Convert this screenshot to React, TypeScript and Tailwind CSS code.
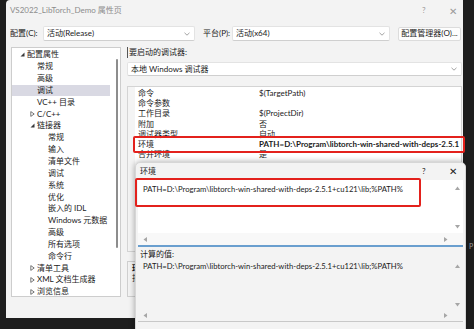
import React from "react";

const treeItems: { label: string; level: number; arrow?: "open" | "closed"; selected?: boolean }[] = [
  { label: "配置属性", level: 0, arrow: "open" },
  { label: "常规", level: 1 },
  { label: "高级", level: 1 },
  { label: "调试", level: 1, selected: true },
  { label: "VC++ 目录", level: 1 },
  { label: "C/C++", level: 1, arrow: "closed" },
  { label: "链接器", level: 1, arrow: "open" },
  { label: "常规", level: 2 },
  { label: "输入", level: 2 },
  { label: "清单文件", level: 2 },
  { label: "调试", level: 2 },
  { label: "系统", level: 2 },
  { label: "优化", level: 2 },
  { label: "嵌入的 IDL", level: 2 },
  { label: "Windows 元数据", level: 2 },
  { label: "高级", level: 2 },
  { label: "所有选项", level: 2 },
  { label: "命令行", level: 2 },
  { label: "清单工具", level: 1, arrow: "closed" },
  { label: "XML 文档生成器", level: 1, arrow: "closed" },
  { label: "浏览信息", level: 1, arrow: "closed" },
];

const gridRows: [string, string][] = [
  ["命令", "$(TargetPath)"],
  ["命令参数", ""],
  ["工作目录", "$(ProjectDir)"],
  ["附加", "否"],
  ["调试器类型", "自动"],
  ["环境", "PATH=D:\\Program\\libtorch-win-shared-with-deps-2.5.1"],
  ["合并环境", "是"],
];

const PATH_VALUE = "PATH=D:\\Program\\libtorch-win-shared-with-deps-2.5.1+cu121\\lib;%PATH%";

function Chevron() {
  return (
    <svg width="6" height="4" viewBox="0 0 6 4" className="shrink-0">
      <path d="M0.5 0.8 L3 3.2 L5.5 0.8" fill="none" stroke="#8a8a8a" strokeWidth="0.8" />
    </svg>
  );
}

function Tri({ dir }: { dir: "up" | "down" | "left" | "right" }) {
  const d = {
    up: "M0 4 L2.5 0.5 L5 4 Z",
    down: "M0 1 L2.5 4.5 L5 1 Z",
    left: "M4 0 L0.5 2.5 L4 5 Z",
    right: "M1 0 L4.5 2.5 L1 5 Z",
  }[dir];
  return (
    <svg width="5" height="5" viewBox="0 0 5 5">
      <path d={d} fill="#a6a6a6" />
    </svg>
  );
}

function TreeArrow({ kind }: { kind: "open" | "closed" }) {
  if (kind === "open") {
    return (
      <svg width="5" height="5" viewBox="0 0 5 5">
        <path d="M4.5 0.5 L4.5 4.5 L0.5 4.5 Z" fill="#3a3a3a" />
      </svg>
    );
  }
  return (
    <svg width="5" height="6" viewBox="0 0 5 6">
      <path d="M0.8 0.6 L4.2 3 L0.8 5.4 Z" fill="none" stroke="#555" strokeWidth="0.8" />
    </svg>
  );
}

function Dropdown({ text, className }: { text: string; className: string }) {
  return (
    <div
      className={`flex items-center justify-between bg-white border border-[#e3e3e3] border-b-[#cfcfcf] rounded-[2px] pl-[3px] pr-[4px] ${className}`}
    >
      <span className="whitespace-nowrap">{text}</span>
      <Chevron />
    </div>
  );
}

function Tree() {
  return (
    <div className="relative w-[110px] h-[250px] bg-white border border-[#cdcdcd] pt-[1px] overflow-hidden">
      {treeItems.map((item, i) => (
        <div key={i} className="flex items-center h-[11.85px] w-[98px]">
          <div className={`flex items-center h-full w-full ${item.selected ? "bg-[#d9d9e3]" : ""}`}>
            <div
              className={
                item.level === 0
                  ? "w-[15px] flex justify-end pr-[2px]"
                  : item.level === 1
                  ? "w-[25px] flex justify-end pr-[2px]"
                  : "w-[36px]"
              }
            >
              {item.arrow ? <TreeArrow kind={item.arrow} /> : null}
            </div>
            <span className="whitespace-nowrap">{item.label}</span>
          </div>
        </div>
      ))}
      {/* thin scroll thumb */}
      <div className="absolute left-[104px] top-[11px] w-[2px] h-[189px] bg-[#8d8d8d] rounded-full" />
    </div>
  );
}

function PropertyGrid() {
  return (
    <div className="relative h-[166px] bg-white border border-[#d4d4d4] flex">
      <div className="w-[7px] bg-[#f4f4f4]" />
      <div className="flex-1 pt-[1px] overflow-hidden">
        {gridRows.map(([name, value], i) => (
          <div key={i} className="flex items-center h-[10.3px]">
            <span className="w-[124px] pl-[3px] whitespace-nowrap">{name}</span>
            <span className={`whitespace-nowrap ${name === "环境" ? "font-bold" : ""}`}>{value}</span>
          </div>
        ))}
      </div>
      {/* annotation box */}
      <div className="absolute left-[5px] top-[49px] w-[332px] h-[17px] border-2 border-[#e3211c] rounded-[2px]" />
    </div>
  );
}

function MainDialog() {
  return (
    <div className="absolute left-[6px] top-0 w-[457px] h-[318px] bg-[#f3f3f3] rounded-tl-[4px] flex flex-col">
      {/* title */}
      <div className="h-[21px] flex items-center pl-[4px] pr-[6px] text-[#8c8c8c]">
        <span className="whitespace-nowrap">VS2022_LibTorch_Demo 属性页</span>
        <span className="ml-auto w-[27px] text-[#9a9a9a]">?</span>
        <span className="text-[10px] leading-none text-[#9a9a9a]">✕</span>
      </div>
      {/* config row */}
      <div className="mt-[5px] h-[15px] flex items-center pl-[4px]">
        <span className="w-[33px] whitespace-nowrap">配置(C):</span>
        <Dropdown text="活动(Release)" className="w-[152px] h-[15px]" />
        <span className="ml-[8px] w-[29px] whitespace-nowrap">平台(P):</span>
        <Dropdown text="活动(x64)" className="w-[158px] h-[15px]" />
        <div className="ml-[8px] w-[63px] h-[14px] flex items-center justify-center bg-[#fdfdfd] border border-[#dcdcdc] rounded-[2px] whitespace-nowrap">
          配置管理器(O)...
        </div>
      </div>
      {/* body */}
      <div className="mt-[6px] flex pl-[5px]">
        <Tree />
        <div className="ml-[6px] w-[335px] flex flex-col">
          <div className="h-[11px] flex items-center">
            <span className="border-l border-[#555] pl-[1px] whitespace-nowrap">要启动的调试器:</span>
          </div>
          <Dropdown text="本地 Windows 调试器" className="mt-[4px] h-[14px] w-[335px]" />
          <div className="mt-[10px]">
            <PropertyGrid />
          </div>
          <div className="mt-[9px] h-[36px] w-[8px] border-l border-t border-b border-[#cfcfcf] pl-[4px] pt-[1px] overflow-hidden">
            <div className="font-bold leading-[10px]">环</div>
            <div className="leading-[10px]">指</div>
          </div>
        </div>
      </div>
    </div>
  );
}

function EnvDialog() {
  return (
    <div className="absolute left-[135px] top-[162px] w-[331px] h-[180px] bg-[#f3f3f3] border border-[#d6d6d6] rounded-[5px] shadow-[0_0_6px_rgba(0,0,0,0.35)] flex flex-col">
      <div className="h-[16px] flex items-center pl-[4px] pr-[8px]">
        <span>环境</span>
        <span className="ml-auto w-[27px]">?</span>
        <span className="text-[10px] leading-none">✕</span>
      </div>
      {/* edit */}
      <div className="ml-[2px] mt-[1px] w-[325px] flex flex-col">
        <div className="h-[53px] bg-white flex">
          <div className="flex-1 pl-[5px] pt-[4px] whitespace-nowrap text-[7.7px] leading-[11px] overflow-hidden">
            {PATH_VALUE}
          </div>
          <div className="w-[11px] flex flex-col items-center justify-between pt-[6px] pb-[4px]">
            <Tri dir="up" />
            <Tri dir="down" />
          </div>
        </div>
        <div className="h-[12px] bg-[#f8f8f8] flex items-center justify-between pl-[5px] pr-[15px]">
          <Tri dir="left" />
          <Tri dir="right" />
        </div>
        <div className="h-[2px] bg-[#6a9fcf]" />
      </div>
      <div className="mt-[2px] h-[11px] pl-[4px] flex items-center">计算的值:</div>
      {/* computed value */}
      <div className="ml-[2px] w-[325px] h-[62px] flex flex-col border-b border-[#c8c8c8]">
        <div className="flex-1 flex">
          <div className="flex-1 pl-[5px] pt-[1px] whitespace-nowrap text-[7.7px] leading-[11px] overflow-hidden">
            {PATH_VALUE}
          </div>
          <div className="w-[11px] flex flex-col items-center justify-between pt-[4px] pb-[3px]">
            <Tri dir="up" />
            <Tri dir="down" />
          </div>
        </div>
        <div className="h-[11px] flex items-center justify-between pl-[5px] pr-[15px]">
          <Tri dir="left" />
          <Tri dir="right" />
        </div>
      </div>
      {/* annotation box */}
      <div className="absolute left-[-1px] top-[15px] w-[286px] h-[29px] border-2 border-[#e3211c] rounded-[2px]" />
    </div>
  );
}

export default function App() {
  return (
    <div className="relative w-[474px] h-[329px] overflow-hidden bg-[#1e1e1e] font-['Lato','Noto_Sans_CJK_SC',sans-serif] text-[8px] leading-[11px] text-[#1b1b1b]">
      <MainDialog />
      <EnvDialog />
      <span className="absolute left-[469px] top-[241px] text-[7px] text-[#9a9a9a]">P</span>
    </div>
  );
}
